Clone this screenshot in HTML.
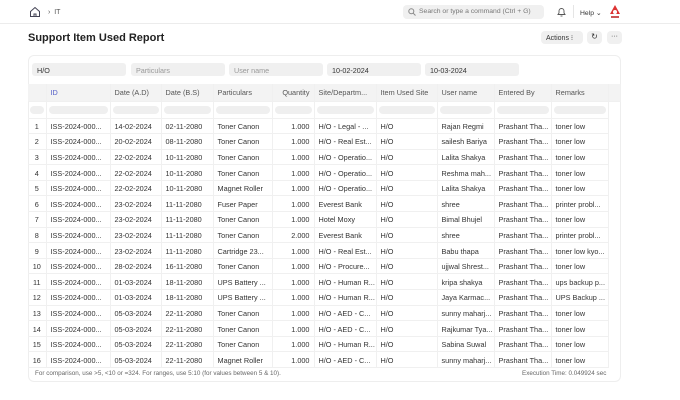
<!DOCTYPE html>
<html><head><meta charset="utf-8"><style>
*{box-sizing:border-box;margin:0;padding:0}
body{width:680px;height:400px;background:#fff;font-family:"Liberation Sans",sans-serif;color:#333;position:relative;overflow:hidden;font-size:7.3px}
.nav{position:absolute;left:0;top:0;width:680px;height:24px;border-bottom:1px solid #ececec}
.abs{position:absolute}
.search{left:403px;top:5px;width:141px;height:14px;background:#f0f0f0;border-radius:4px;font-size:6.8px;color:#777;padding:3px 0 0 16px}
.btn{background:#f0f0f0;border-radius:4px;height:13px;top:31px}
.card{left:28px;top:55px;width:593px;height:327px;border:1px solid #eee;border-radius:6px}
.f{top:63px;height:13px;background:#f0f0f0;border-radius:3px;font-size:7.2px;padding:3px 0 0 5px;color:#333}
table{position:absolute;left:28px;top:84px;width:592px;border-collapse:collapse;table-layout:fixed}
td,th{white-space:nowrap;overflow:hidden;padding:0 4px;font-weight:normal;text-align:left;border-right:1px solid #f0f0f0;border-bottom:1px solid #f0f0f0}
th{background:#f3f3f3;height:17px;color:#555}
tr.fl td{height:17px;padding:3px 2px}
tr.fl div{height:8px;background:#efefef;border-radius:4px}
tbody tr.r td{height:15.6px;color:#333;padding-top:1px}
td.n{color:#666;text-align:center;padding:0}
td.q{text-align:right}
.foot{left:35px;top:370px;font-size:6.3px;color:#666}
</style></head><body>
<div class="nav">
<svg class="abs" style="left:29px;top:6px" width="12" height="12" viewBox="0 0 12 12" fill="none" stroke="#445" stroke-width="1"><path d="M1.5 5.5L6 1.5l4.5 4v5h-9z"/><path d="M5 10.5V8h2v2.5"/></svg>
<div class="abs" style="left:48px;top:9px;font-size:7px;color:#555">›&nbsp; IT</div>
<div class="abs search">Search or type a command (Ctrl + G)</div>
<svg class="abs" style="left:408px;top:8px" width="8" height="8" viewBox="0 0 8 8" fill="none" stroke="#888"><circle cx="3.3" cy="3.3" r="2.5"/><path d="M5.2 5.2L7.5 7.5"/></svg>
<svg class="abs" style="left:557px;top:7px" width="9" height="10" viewBox="0 0 9 10" fill="none" stroke="#555" stroke-width=".9"><path d="M1 7.5h7L7 6V4A2.5 2.5 0 0 0 2 4v2z"/><path d="M3.5 9h2"/></svg>
<div class="abs" style="left:573px;top:5px;width:1px;height:13px;background:#e5e5e5"></div>
<div class="abs" style="left:580px;top:9px;font-size:6.8px;color:#333">Help ⌄</div>
<svg class="abs" style="left:608px;top:4px" width="14" height="16" viewBox="0 0 14 16"><path d="M7 1L2 10h10z" fill="#d33"/><circle cx="7" cy="8" r="2" fill="#fff"/><path d="M3 12h8v2H3z" fill="#c55"/></svg>
</div>
<div class="abs" style="left:28px;top:32px;font-size:11px;font-weight:bold;color:#222">Support Item Used Report</div>
<div class="abs btn" style="left:541px;width:42px;font-size:7px;padding:3px 0 0 5px">Actions ⁝</div>
<div class="abs btn" style="left:587px;width:15px;text-align:center;font-size:8px;padding-top:1px">↻</div>
<div class="abs btn" style="left:607px;width:15px;text-align:center;font-size:7px;padding-top:2px">···</div>
<div class="abs card"></div>
<div class="abs f" style="left:32px;width:94px">H/O</div>
<div class="abs f" style="left:131px;width:94px;color:#999">Particulars</div>
<div class="abs f" style="left:229px;width:94px;color:#999">User name</div>
<div class="abs f" style="left:327px;width:94px">10-02-2024</div>
<div class="abs f" style="left:425px;width:94px">10-03-2024</div>
<table>
<colgroup><col style="width:18px"><col style="width:64px"><col style="width:51px"><col style="width:52px"><col style="width:59px"><col style="width:42px"><col style="width:62px"><col style="width:61px"><col style="width:57px"><col style="width:57px"><col style="width:57px"><col style="width:12px"></colgroup>
<thead><tr><th></th><th style="color:#5560c8">ID</th><th>Date (A.D)</th><th>Date (B.S)</th><th>Particulars</th><th style="text-align:right">Quantity</th><th>Site/Departm...</th><th>Item Used Site</th><th>User name</th><th>Entered By</th><th>Remarks</th><th></th></tr></thead>
<tbody>
<tr class="fl"><td><div></div></td><td><div></div></td><td><div></div></td><td><div></div></td><td><div></div></td><td><div></div></td><td><div></div></td><td><div></div></td><td><div></div></td><td><div></div></td><td><div></div></td><td style="border:0"></td></tr>
<tr class="r"><td class="n">1</td><td>ISS-2024-000...</td><td>14-02-2024</td><td>02-11-2080</td><td>Toner Canon</td><td class="q">1.000</td><td>H/O - Legal - ...</td><td>H/O</td><td>Rajan Regmi</td><td>Prashant Tha...</td><td>toner low</td><td style="border:0"></td></tr>
<tr class="r"><td class="n">2</td><td>ISS-2024-000...</td><td>20-02-2024</td><td>08-11-2080</td><td>Toner Canon</td><td class="q">1.000</td><td>H/O - Real Est...</td><td>H/O</td><td>sailesh Bariya</td><td>Prashant Tha...</td><td>toner low</td><td style="border:0"></td></tr>
<tr class="r"><td class="n">3</td><td>ISS-2024-000...</td><td>22-02-2024</td><td>10-11-2080</td><td>Toner Canon</td><td class="q">1.000</td><td>H/O - Operatio...</td><td>H/O</td><td>Lalita Shakya</td><td>Prashant Tha...</td><td>toner low</td><td style="border:0"></td></tr>
<tr class="r"><td class="n">4</td><td>ISS-2024-000...</td><td>22-02-2024</td><td>10-11-2080</td><td>Toner Canon</td><td class="q">1.000</td><td>H/O - Operatio...</td><td>H/O</td><td>Reshma mah...</td><td>Prashant Tha...</td><td>toner low</td><td style="border:0"></td></tr>
<tr class="r"><td class="n">5</td><td>ISS-2024-000...</td><td>22-02-2024</td><td>10-11-2080</td><td>Magnet Roller</td><td class="q">1.000</td><td>H/O - Operatio...</td><td>H/O</td><td>Lalita Shakya</td><td>Prashant Tha...</td><td>toner low</td><td style="border:0"></td></tr>
<tr class="r"><td class="n">6</td><td>ISS-2024-000...</td><td>23-02-2024</td><td>11-11-2080</td><td>Fuser Paper</td><td class="q">1.000</td><td>Everest Bank</td><td>H/O</td><td>shree</td><td>Prashant Tha...</td><td>printer probl...</td><td style="border:0"></td></tr>
<tr class="r"><td class="n">7</td><td>ISS-2024-000...</td><td>23-02-2024</td><td>11-11-2080</td><td>Toner Canon</td><td class="q">1.000</td><td>Hotel Moxy</td><td>H/O</td><td>Bimal Bhujel</td><td>Prashant Tha...</td><td>toner low</td><td style="border:0"></td></tr>
<tr class="r"><td class="n">8</td><td>ISS-2024-000...</td><td>23-02-2024</td><td>11-11-2080</td><td>Toner Canon</td><td class="q">2.000</td><td>Everest Bank</td><td>H/O</td><td>shree</td><td>Prashant Tha...</td><td>printer probl...</td><td style="border:0"></td></tr>
<tr class="r"><td class="n">9</td><td>ISS-2024-000...</td><td>23-02-2024</td><td>11-11-2080</td><td>Cartridge 23...</td><td class="q">1.000</td><td>H/O - Real Est...</td><td>H/O</td><td>Babu thapa</td><td>Prashant Tha...</td><td>toner low kyo...</td><td style="border:0"></td></tr>
<tr class="r"><td class="n">10</td><td>ISS-2024-000...</td><td>28-02-2024</td><td>16-11-2080</td><td>Toner Canon</td><td class="q">1.000</td><td>H/O - Procure...</td><td>H/O</td><td>ujjwal Shrest...</td><td>Prashant Tha...</td><td>toner low</td><td style="border:0"></td></tr>
<tr class="r"><td class="n">11</td><td>ISS-2024-000...</td><td>01-03-2024</td><td>18-11-2080</td><td>UPS Battery ...</td><td class="q">1.000</td><td>H/O - Human R...</td><td>H/O</td><td>kripa shakya</td><td>Prashant Tha...</td><td>ups backup p...</td><td style="border:0"></td></tr>
<tr class="r"><td class="n">12</td><td>ISS-2024-000...</td><td>01-03-2024</td><td>18-11-2080</td><td>UPS Battery ...</td><td class="q">1.000</td><td>H/O - Human R...</td><td>H/O</td><td>Jaya Karmac...</td><td>Prashant Tha...</td><td>UPS Backup ...</td><td style="border:0"></td></tr>
<tr class="r"><td class="n">13</td><td>ISS-2024-000...</td><td>05-03-2024</td><td>22-11-2080</td><td>Toner Canon</td><td class="q">1.000</td><td>H/O - AED - C...</td><td>H/O</td><td>sunny maharj...</td><td>Prashant Tha...</td><td>toner low</td><td style="border:0"></td></tr>
<tr class="r"><td class="n">14</td><td>ISS-2024-000...</td><td>05-03-2024</td><td>22-11-2080</td><td>Toner Canon</td><td class="q">1.000</td><td>H/O - AED - C...</td><td>H/O</td><td>Rajkumar Tya...</td><td>Prashant Tha...</td><td>toner low</td><td style="border:0"></td></tr>
<tr class="r"><td class="n">15</td><td>ISS-2024-000...</td><td>05-03-2024</td><td>22-11-2080</td><td>Toner Canon</td><td class="q">1.000</td><td>H/O - Human R...</td><td>H/O</td><td>Sabina Suwal</td><td>Prashant Tha...</td><td>toner low</td><td style="border:0"></td></tr>
<tr class="r"><td class="n">16</td><td>ISS-2024-000...</td><td>05-03-2024</td><td>22-11-2080</td><td>Magnet Roller</td><td class="q">1.000</td><td>H/O - AED - C...</td><td>H/O</td><td>sunny maharj...</td><td>Prashant Tha...</td><td>toner low</td><td style="border:0"></td></tr>
</tbody></table>
<div class="abs foot">For comparison, use &gt;5, &lt;10 or =324. For ranges, use 5:10 (for values between 5 &amp; 10).</div>
<div class="abs foot" style="left:522px">Execution Time: 0.049924 sec</div>
</body></html>
